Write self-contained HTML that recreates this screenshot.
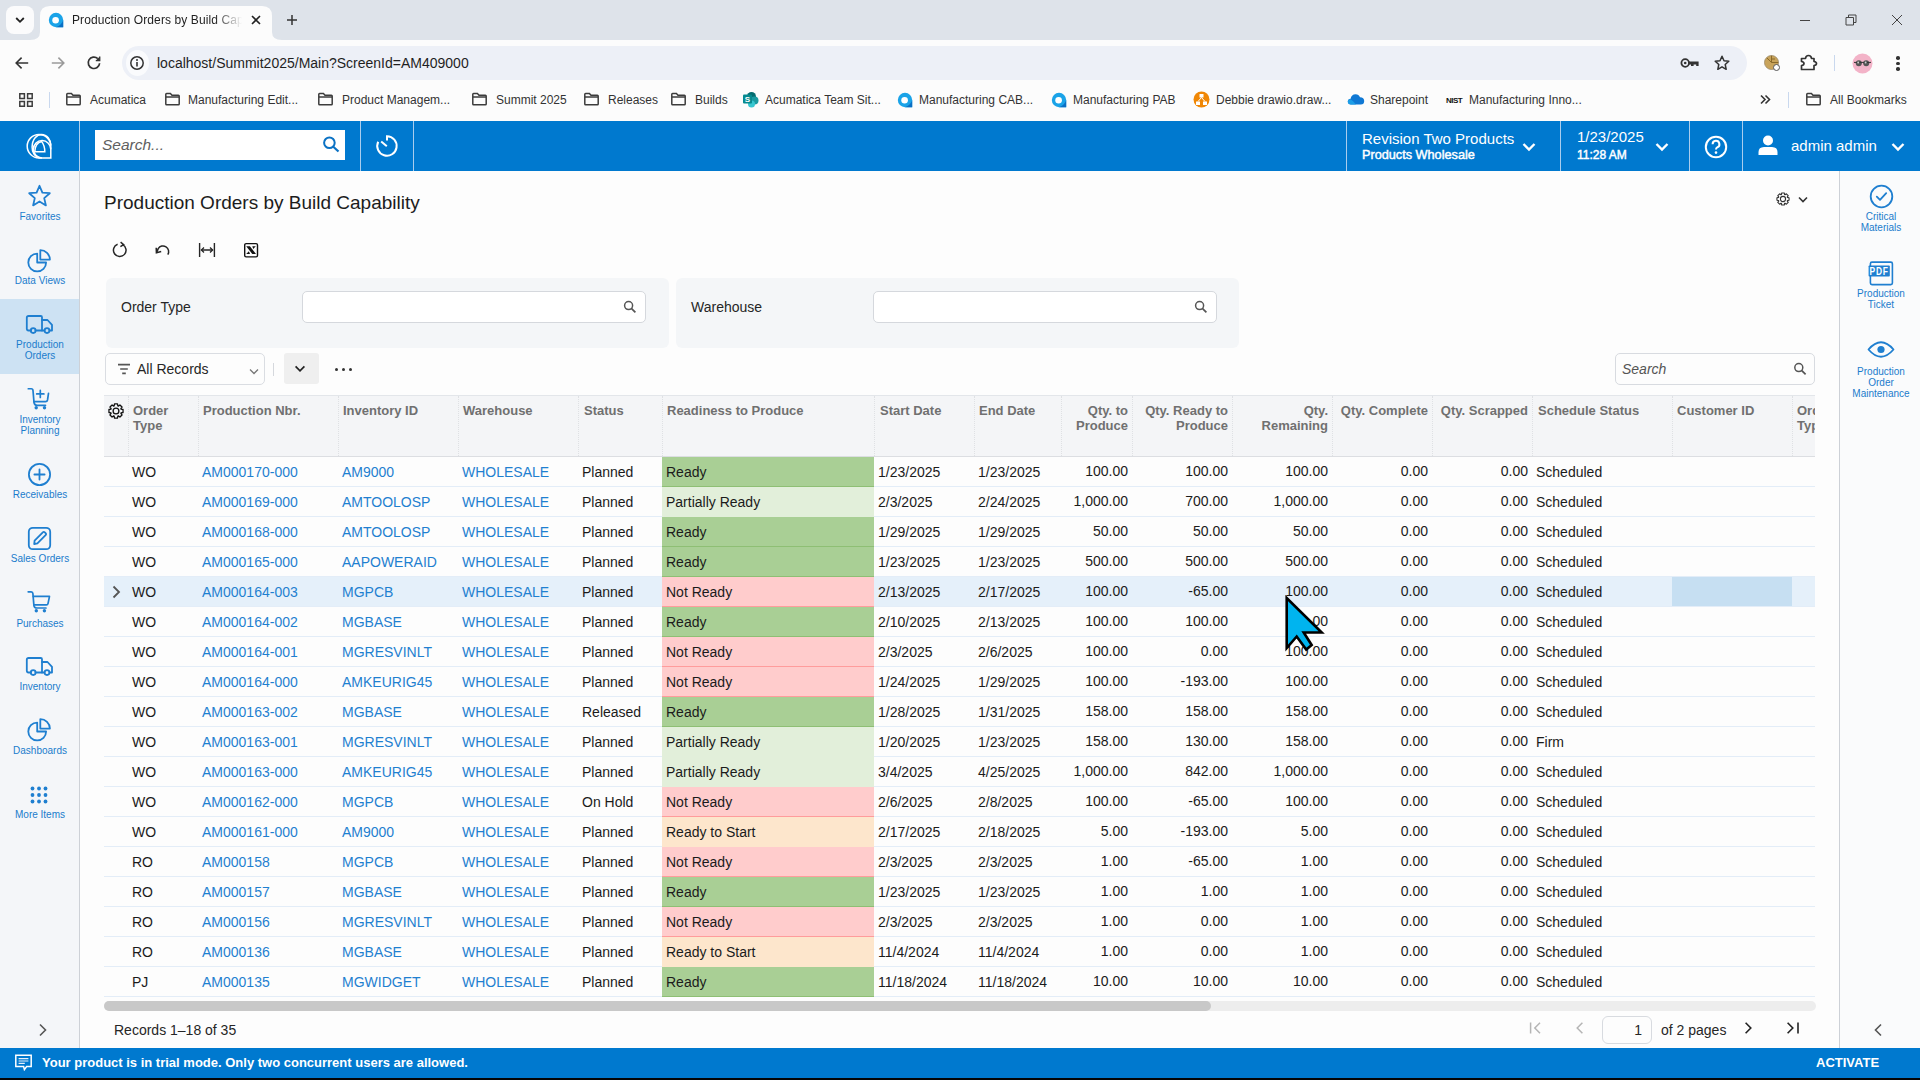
<!DOCTYPE html>
<html><head><meta charset="utf-8">
<style>
*{box-sizing:border-box;margin:0;padding:0}
html,body{width:1920px;height:1080px;overflow:hidden;background:#fdfdfd;font-family:"Liberation Sans",sans-serif;color:#222}
.a{position:absolute}
svg{display:block}
/* chrome */
#tabbar{left:0;top:0;width:1920px;height:40px;background:#dee3ea}
#tabdd{left:6px;top:6px;width:28px;height:28px;border-radius:8px;background:#fbfbfc}
#tab{left:40px;top:6px;width:232px;height:34px;background:#fbfbfc;border-radius:10px 10px 0 0}
#toolbar{left:0;top:40px;width:1920px;height:40px;background:#fcfcfc}
#omni{left:122px;top:46px;width:1625px;height:34px;border-radius:17px;background:#edf0f7}
#bmbar{left:0;top:80px;width:1920px;height:41px;background:#fcfcfc}
.ctext{font-size:12px;color:#2a2a2a;white-space:nowrap}
/* acumatica header */
#hdr{left:0;top:121px;width:1920px;height:50px;background:#0079cf}
.hdiv{top:121px;width:1px;height:50px;background:#a9cdee}
#lsb{left:0;top:171px;width:80px;height:877px;background:#f4f6f9;border-right:1px solid #cdd1d7}
#rsb{left:1839px;top:171px;width:81px;height:877px;background:#fafbfc;border-left:1px solid #cdd1d7}
.sbl{font-size:10px;color:#1a7ccc;text-align:center;line-height:11px;width:80px;left:0}
.rsbl_unused{font-size:10px;color:#1a7ccc;text-align:center;line-height:11px;width:82px;left:1838px}
#banner{left:0;top:1048px;width:1920px;height:30px;background:#0079cf}
#blk{left:0;top:1078px;width:1920px;height:2px;background:#050505}

/* grid */
#grid{left:104px;top:395px;width:1711px;height:602px;overflow:hidden}
#ghdr{left:0;top:0;width:1711px;height:62px;background:#f4f5f7;border-top:1px solid #e3e6ea;border-bottom:1px solid #dcdee2}
.vl{top:1px;width:1px;height:60px;border-left:1px dotted #dfe1e4}
.hc{top:8px;font-size:13px;font-weight:bold;color:#707070;line-height:15px;white-space:nowrap}
.gr{left:0;width:1711px;height:30px;border-bottom:1px solid #e3edf8;background:#fdfdfd}
.gr.sel{background:#e5f0fa}
.gc{top:0;height:29px;line-height:31px;font-size:14px;color:#1b1b1b;padding:0 4px;white-space:nowrap;overflow:hidden}
.gc.r{text-align:right;line-height:29px}
.gc.lk{color:#1f80d0}
.rg{background:#a9cf95;top:0;height:30px;border-bottom:1px solid #8ebf74;color:#1b1b1b}
.rp{background:#e2efda;top:0;height:30px;border-bottom:1px solid #e2efda}
.rn{background:#ffcccc;top:0;height:30px;border-bottom:1px solid #ff9c9c}
.rs{background:#fde6cc;top:0;height:30px;border-bottom:1px solid #fde6cc}
</style></head><body>
<div id="tabbar" class="a"></div>
<div id="tabdd" class="a"></div>
<svg class="a" style="left:14px;top:14px" width="12" height="12" viewBox="0 0 12 12"><path d="M2.2 4 L6 7.8 L9.8 4" fill="none" stroke="#222" stroke-width="1.8"/></svg>
<svg class="a" style="left:30px;top:6px" width="252" height="34" viewBox="0 0 252 34"><path d="M0 34 Q10 34 10 26 V10 Q10 0 20 0 H232 Q242 0 242 10 V26 Q242 34 252 34 Z" fill="#fcfcfc"/></svg>
<svg class="a" style="left:48px;top:12px" width="16" height="16" viewBox="0 0 16 16"><path d="M8 0.8 A7.2 7.2 0 0 0 8 15.2 H15.2 V8 A7.2 7.2 0 0 0 8 0.8 Z" fill="#1aa3e8"/><path d="M8 15.2 H15.2 V8 Q14 13 8 15.2Z" fill="#0b6fc4"/><circle cx="7.6" cy="8.2" r="3.3" fill="#fff"/></svg>
<div class="a ctext" style="left:72px;top:13px;font-size:12px;letter-spacing:0.1px;color:#1f1f1f;width:170px;overflow:hidden;-webkit-mask-image:linear-gradient(90deg,#000 84%,transparent 100%)">Production Orders by Build Capability</div>
<svg class="a" style="left:250px;top:14px" width="12" height="12" viewBox="0 0 12 12"><path d="M2 2 L10 10 M10 2 L2 10" stroke="#222" stroke-width="1.6"/></svg>
<svg class="a" style="left:285px;top:13px" width="14" height="14" viewBox="0 0 14 14"><path d="M7 2 V12 M2 7 H12" stroke="#333" stroke-width="1.5"/></svg>
<div class="a" style="left:1800px;top:20px;width:10px;height:1px;background:#444"></div>
<svg class="a" style="left:1845px;top:14px" width="12" height="12" viewBox="0 0 12 12"><path d="M1 3.5 H8.5 V11 H1 Z M3.5 3.5 V1 H11 V8.5 H8.5" fill="none" stroke="#444" stroke-width="1"/></svg>
<svg class="a" style="left:1891px;top:14px" width="12" height="12" viewBox="0 0 12 12"><path d="M1 1 L11 11 M11 1 L1 11" stroke="#444" stroke-width="1"/></svg>
<div id="toolbar" class="a"></div>
<svg class="a" style="left:14px;top:55px" width="16" height="16" viewBox="0 0 16 16"><path d="M14.2 8 H2.4 M7.6 2.6 L2.2 8 L7.6 13.4" fill="none" stroke="#333" stroke-width="1.6"/></svg>
<svg class="a" style="left:50px;top:55px" width="16" height="16" viewBox="0 0 16 16"><path d="M1.8 8 H13.6 M8.4 2.6 L13.8 8 L8.4 13.4" fill="none" stroke="#9a9a9a" stroke-width="1.6"/></svg>
<svg class="a" style="left:86px;top:55px" width="16" height="16" viewBox="0 0 16 16"><path d="M13.6 8.2 A5.7 5.7 0 1 1 11.8 3.6" fill="none" stroke="#333" stroke-width="1.7"/><path d="M13.8 1.6 V5.6 H9.8" fill="#333" stroke="#333" stroke-width="1.2"/></svg>
<div id="omni" class="a"></div>
<div class="a" style="left:126px;top:50px;width:23px;height:26px;border-radius:50%;background:#fafbfd"></div>
<svg class="a" style="left:129px;top:55px" width="16" height="16" viewBox="0 0 16 16"><circle cx="8" cy="8" r="6.2" fill="none" stroke="#333" stroke-width="1.5"/><path d="M8 7 V11.4" stroke="#333" stroke-width="1.6"/><circle cx="8" cy="4.9" r="1" fill="#333"/></svg>
<div class="a ctext" style="left:157px;top:55px;font-size:14px;color:#1f1f1f">localhost/Summit2025/Main?ScreenId=AM409000</div>
<svg class="a" style="left:1680px;top:56px" width="20" height="14" viewBox="0 0 20 14"><circle cx="5.2" cy="7" r="3.8" fill="none" stroke="#333" stroke-width="1.8"/><circle cx="5.2" cy="7" r="1.3" fill="#333"/><path d="M9 5.6 H18.6 V10 H16.2 V8.4 H13.6 V10 H11 V8.4 H9 Z" fill="#333"/></svg>
<svg class="a" style="left:1714px;top:55px" width="16" height="16" viewBox="0 0 16 16"><path d="M8 1.3 L10 5.8 L14.8 6.2 L11.2 9.5 L12.2 14.3 L8 11.8 L3.8 14.3 L4.8 9.5 L1.2 6.2 L6 5.8 Z" fill="none" stroke="#333" stroke-width="1.5" stroke-linejoin="round"/></svg>
<svg class="a" style="left:1764px;top:55px" width="17" height="16" viewBox="0 0 17 16"><circle cx="7.5" cy="7.5" r="7" fill="#c8a35a"/><path d="M7.5 0.5 V7.5 H14.5 M3 3 L7.5 7.5 M7.5 4 H11" stroke="#8a6a2a" stroke-width="1" fill="none"/><circle cx="7.5" cy="7.5" r="7" fill="none" stroke="#9b8a6a" stroke-width="0.8"/><circle cx="12.5" cy="12.5" r="3" fill="#fff" stroke="#555" stroke-width="1"/></svg>
<svg class="a" style="left:1800px;top:54px" width="18" height="17" viewBox="0 0 18 17"><path d="M1.5 4.5 H5.5 Q5.8 1.5 8.5 1.5 Q11.2 1.5 11.5 4.5 H14 V7.5 Q16.5 7.8 16.5 9.5 Q16.5 11.2 14 11.5 V15.5 H1.5 V11.5 Q4 11.2 4 9.5 Q4 7.8 1.5 7.5 Z" fill="none" stroke="#333" stroke-width="1.7" stroke-linejoin="round"/></svg>
<div class="a" style="left:1834px;top:55px;width:1px;height:16px;background:#c9d8ee"></div>
<svg class="a" style="left:1852px;top:53px" width="21" height="21" viewBox="0 0 21 21"><circle cx="10.5" cy="10.5" r="10" fill="#f3b3c8"/><circle cx="6.8" cy="10.2" r="3" fill="#555"/><circle cx="14.2" cy="10.2" r="3" fill="#555"/><path d="M2 9.4 H19" stroke="#333" stroke-width="1"/><circle cx="6.2" cy="9.4" r="1" fill="#ccc"/><circle cx="13.6" cy="9.4" r="1" fill="#ccc"/></svg>
<div class="a" style="left:1896px;top:56px;width:3.5px;height:3.5px;border-radius:50%;background:#333"></div><div class="a" style="left:1896px;top:61.5px;width:3.5px;height:3.5px;border-radius:50%;background:#333"></div><div class="a" style="left:1896px;top:67px;width:3.5px;height:3.5px;border-radius:50%;background:#333"></div>
<div id="bmbar" class="a"></div>
<svg class="a" style="left:18px;top:92px" width="16" height="16" viewBox="0 0 16 16"><path d="M1.8 1.8 H6.4 V6.4 H1.8 Z M9.6 1.8 H14.2 V6.4 H9.6 Z M1.8 9.6 H6.4 V14.2 H1.8 Z M9.6 9.6 H14.2 V14.2 H9.6 Z" fill="none" stroke="#3c3c3c" stroke-width="1.5"/></svg>
<div class="a" style="left:49px;top:92px;width:1px;height:16px;background:#c9d8ee"></div>
<svg class="a" style="left:65px;top:91px" width="17" height="16" viewBox="0 0 17 16"><path d="M1.8 3.2 Q1.8 2.4 2.6 2.4 H6.4 L8 4.2 H14.4 Q15.2 4.2 15.2 5 V13 Q15.2 13.8 14.4 13.8 H2.6 Q1.8 13.8 1.8 13 Z M1.8 6 H15.2" fill="none" stroke="#3c3c3c" stroke-width="1.5"/></svg>
<div class="a ctext" style="left:90px;top:93px;color:#333">Acumatica</div>
<svg class="a" style="left:164px;top:91px" width="17" height="16" viewBox="0 0 17 16"><path d="M1.8 3.2 Q1.8 2.4 2.6 2.4 H6.4 L8 4.2 H14.4 Q15.2 4.2 15.2 5 V13 Q15.2 13.8 14.4 13.8 H2.6 Q1.8 13.8 1.8 13 Z M1.8 6 H15.2" fill="none" stroke="#3c3c3c" stroke-width="1.5"/></svg>
<div class="a ctext" style="left:188px;top:93px;color:#333">Manufacturing Edit...</div>
<svg class="a" style="left:317px;top:91px" width="17" height="16" viewBox="0 0 17 16"><path d="M1.8 3.2 Q1.8 2.4 2.6 2.4 H6.4 L8 4.2 H14.4 Q15.2 4.2 15.2 5 V13 Q15.2 13.8 14.4 13.8 H2.6 Q1.8 13.8 1.8 13 Z M1.8 6 H15.2" fill="none" stroke="#3c3c3c" stroke-width="1.5"/></svg>
<div class="a ctext" style="left:342px;top:93px;color:#333">Product Managem...</div>
<svg class="a" style="left:471px;top:91px" width="17" height="16" viewBox="0 0 17 16"><path d="M1.8 3.2 Q1.8 2.4 2.6 2.4 H6.4 L8 4.2 H14.4 Q15.2 4.2 15.2 5 V13 Q15.2 13.8 14.4 13.8 H2.6 Q1.8 13.8 1.8 13 Z M1.8 6 H15.2" fill="none" stroke="#3c3c3c" stroke-width="1.5"/></svg>
<div class="a ctext" style="left:496px;top:93px;color:#333">Summit 2025</div>
<svg class="a" style="left:583px;top:91px" width="17" height="16" viewBox="0 0 17 16"><path d="M1.8 3.2 Q1.8 2.4 2.6 2.4 H6.4 L8 4.2 H14.4 Q15.2 4.2 15.2 5 V13 Q15.2 13.8 14.4 13.8 H2.6 Q1.8 13.8 1.8 13 Z M1.8 6 H15.2" fill="none" stroke="#3c3c3c" stroke-width="1.5"/></svg>
<div class="a ctext" style="left:608px;top:93px;color:#333">Releases</div>
<svg class="a" style="left:670px;top:91px" width="17" height="16" viewBox="0 0 17 16"><path d="M1.8 3.2 Q1.8 2.4 2.6 2.4 H6.4 L8 4.2 H14.4 Q15.2 4.2 15.2 5 V13 Q15.2 13.8 14.4 13.8 H2.6 Q1.8 13.8 1.8 13 Z M1.8 6 H15.2" fill="none" stroke="#3c3c3c" stroke-width="1.5"/></svg>
<div class="a ctext" style="left:695px;top:93px;color:#333">Builds</div>
<svg class="a" style="left:742px;top:91px" width="17" height="17" viewBox="0 0 17 17"><circle cx="9.5" cy="5.5" r="4.5" fill="#036c70"/><circle cx="12.5" cy="9.5" r="4" fill="#1a9ba1"/><circle cx="9.5" cy="13" r="3.5" fill="#37c6d0"/><rect x="1" y="3.5" width="9" height="9" rx="1" fill="#058a8f"/><text x="5.5" y="11" text-anchor="middle" font-family="Liberation Sans" font-weight="bold" font-size="8" fill="#fff">S</text></svg>
<div class="a ctext" style="left:765px;top:93px;color:#333">Acumatica Team Sit...</div>
<svg class="a" style="left:897px;top:92px" width="16" height="16" viewBox="0 0 16 16"><path d="M8 0.8 A7.2 7.2 0 0 0 8 15.2 H15.2 V8 A7.2 7.2 0 0 0 8 0.8 Z" fill="#1aa3e8"/><path d="M8 15.2 H15.2 V8 Q14 13 8 15.2Z" fill="#0b6fc4"/><circle cx="7.6" cy="8.2" r="3.3" fill="#fff"/></svg>
<div class="a ctext" style="left:919px;top:93px;color:#333">Manufacturing CAB...</div>
<svg class="a" style="left:1051px;top:92px" width="16" height="16" viewBox="0 0 16 16"><path d="M8 0.8 A7.2 7.2 0 0 0 8 15.2 H15.2 V8 A7.2 7.2 0 0 0 8 0.8 Z" fill="#1aa3e8"/><path d="M8 15.2 H15.2 V8 Q14 13 8 15.2Z" fill="#0b6fc4"/><circle cx="7.6" cy="8.2" r="3.3" fill="#fff"/></svg>
<div class="a ctext" style="left:1073px;top:93px;color:#333">Manufacturing PAB</div>
<svg class="a" style="left:1193px;top:91px" width="17" height="17" viewBox="0 0 17 17"><circle cx="8.5" cy="8.5" r="8" fill="#f08705"/><rect x="6.5" y="3" width="4" height="3.5" fill="#fff"/><rect x="3" y="10.5" width="4" height="3.5" fill="#fff"/><rect x="10" y="10.5" width="4" height="3.5" fill="#fff"/><path d="M8.5 6.5 L5 10.5 M8.5 6.5 L12 10.5" stroke="#fff" stroke-width="1"/></svg>
<div class="a ctext" style="left:1216px;top:93px;color:#333">Debbie drawio.draw...</div>
<svg class="a" style="left:1347px;top:92px" width="18" height="14" viewBox="0 0 18 14"><path d="M4 12.5 Q0.8 12.5 0.8 9.6 Q0.8 7 3.6 6.8 Q4.4 2.2 8.6 2.2 Q11.8 2.2 13 5.2 Q17.2 5.4 17.2 9 Q17.2 12.5 13.8 12.5 Z" fill="#0f78d4"/><path d="M4 12.5 Q0.8 12.5 0.8 9.6 Q0.8 7.6 3 7 Q6 8.5 9 12.5 Z" fill="#1c9de6"/></svg>
<div class="a ctext" style="left:1370px;top:93px;color:#333">Sharepoint</div>
<div class="a" style="left:1446px;top:96px;font-size:8px;font-weight:bold;color:#111;letter-spacing:-0.5px;font-family:'Liberation Sans'">NIST</div>
<div class="a ctext" style="left:1469px;top:93px;color:#333">Manufacturing Inno...</div>
<svg class="a" style="left:1759px;top:93px" width="13" height="13" viewBox="0 0 13 13"><path d="M2 2.5 L6 6.5 L2 10.5 M6.5 2.5 L10.5 6.5 L6.5 10.5" fill="none" stroke="#333" stroke-width="1.6"/></svg>
<div class="a" style="left:1788px;top:92px;width:1px;height:16px;background:#c9d8ee"></div>
<svg class="a" style="left:1805px;top:91px" width="17" height="16" viewBox="0 0 17 16"><path d="M1.8 3.2 Q1.8 2.4 2.6 2.4 H6.4 L8 4.2 H14.4 Q15.2 4.2 15.2 5 V13 Q15.2 13.8 14.4 13.8 H2.6 Q1.8 13.8 1.8 13 Z M1.8 6 H15.2" fill="none" stroke="#3c3c3c" stroke-width="1.5"/></svg>
<div class="a ctext" style="left:1830px;top:93px;color:#333">All Bookmarks</div>


<div id="hdr" class="a"></div>
<svg class="a" style="left:26px;top:133px" width="26" height="26" viewBox="0 0 26 26"><g fill="none" stroke="#fff" stroke-width="1.5" stroke-linejoin="miter"><path d="M13 25 A11.8 11.8 0 1 1 24.8 13.2 V25 Z"/><path d="M14.5 25 C8.5 24 6 19 6.1 14 C6.2 6 11 1.4 15.5 1.4 C21 1.6 24.8 6.5 24.8 12.5"/><path d="M16 25 A8.7 8.7 0 1 1 24.8 16.3"/><path d="M8.8 18.7 C9 13 12 9.4 15.7 8.6 C18 11.5 18.8 15 18.8 18.7 Z"/></g></svg>
<div class="hdiv a" style="left:79px"></div>
<div class="a" style="left:95px;top:130px;width:250px;height:30px;background:#fff"></div>
<div class="a" style="left:102px;top:136px;font-size:15.5px;font-style:italic;color:#606060">Search...</div>
<svg class="a" style="left:321px;top:135px" width="20" height="20" viewBox="0 0 20 20"><circle cx="8.4" cy="7.8" r="5.3" fill="none" stroke="#0b72c4" stroke-width="2"/><path d="M12.3 11.7 L17.5 16.5" stroke="#0b72c4" stroke-width="2.2"/></svg>
<div class="hdiv a" style="left:360px"></div>
<svg class="a" style="left:375px;top:134px" width="24" height="24" viewBox="0 0 24 24"><path d="M12 6.5 V2.3 A9.7 9.7 0 1 1 3.2 7.8" fill="none" stroke="#fff" stroke-width="2"/><path d="M6.2 7.6 L11.8 12.3" stroke="#fff" stroke-width="2"/></svg>
<div class="hdiv a" style="left:413px"></div>
<div class="hdiv a" style="left:1346px"></div>
<div class="a" style="left:1362px;top:130px;font-size:15px;color:#fff;line-height:17px;white-space:nowrap">Revision Two Products</div>
<div class="a" style="left:1362px;top:148px;font-size:12.7px;color:#fff;line-height:14px;white-space:nowrap;-webkit-text-stroke:0.45px #fff">Products Wholesale</div>
<svg class="a" style="left:1521px;top:141px" width="16" height="12" viewBox="0 0 16 12"><path d="M2.5 3 L8 8.5 L13.5 3" fill="none" stroke="#fff" stroke-width="2.4"/></svg>
<div class="hdiv a" style="left:1560px"></div>
<div class="a" style="left:1577px;top:128px;font-size:15px;color:#fff;line-height:17px;white-space:nowrap">1/23/2025</div>
<div class="a" style="left:1577px;top:148px;font-size:12px;color:#fff;line-height:14px;white-space:nowrap;-webkit-text-stroke:0.45px #fff">11:28 AM</div>
<svg class="a" style="left:1654px;top:141px" width="16" height="12" viewBox="0 0 16 12"><path d="M2.5 3 L8 8.5 L13.5 3" fill="none" stroke="#fff" stroke-width="2.4"/></svg>
<div class="hdiv a" style="left:1689px"></div>
<svg class="a" style="left:1704px;top:135px" width="24" height="24" viewBox="0 0 24 24"><circle cx="12" cy="12" r="10.2" fill="none" stroke="#fff" stroke-width="2"/><path d="M8.6 9.2 A3.4 3.4 0 1 1 13.2 12.4 Q12 13 12 14.6" fill="none" stroke="#fff" stroke-width="2"/><circle cx="12" cy="17.6" r="1.3" fill="#fff"/></svg>
<div class="hdiv a" style="left:1742px"></div>
<svg class="a" style="left:1757px;top:135px" width="22" height="21" viewBox="0 0 22 21"><circle cx="11" cy="5.5" r="5" fill="#fff"/><path d="M1.5 20 V17 Q1.5 12.2 7 12 H15 Q20.5 12.2 20.5 17 V20 Z" fill="#fff"/></svg>
<div class="a" style="left:1791px;top:137px;font-size:15px;color:#fff;white-space:nowrap">admin admin</div>
<svg class="a" style="left:1890px;top:141px" width="16" height="12" viewBox="0 0 16 12"><path d="M2.5 3 L8 8.5 L13.5 3" fill="none" stroke="#fff" stroke-width="2.4"/></svg>
<div id="lsb" class="a"></div>
<div class="a" style="left:0;top:299px;width:79px;height:75px;background:#cde2f3"></div>
<svg class="a" style="left:27px;top:184px" width="25" height="24" viewBox="0 0 25 24"><path d="M12.5 1.8 L15.4 8.6 L22.8 9.2 L17.2 14.1 L18.9 21.4 L12.5 17.5 L6.1 21.4 L7.8 14.1 L2.2 9.2 L9.6 8.6 Z" fill="none" stroke="#1f7fd0" stroke-width="1.8" stroke-linejoin="round" stroke-linecap="round"/></svg>
<div class="a sbl" style="left:0px;width:80px;top:211.0px">Favorites</div>
<svg class="a" style="left:26px;top:249px" width="26" height="26" viewBox="0 0 26 26"><path d="M11.2 4.6 A8.9 8.9 0 1 0 20.1 13.5 H11.2 Z" fill="none" stroke="#1f7fd0" stroke-width="1.8" stroke-linejoin="round" stroke-linecap="round"/><path d="M14.3 1.2 A9.6 9.6 0 0 1 23.9 10.6 H14.3 Z" fill="none" stroke="#1f7fd0" stroke-width="1.8" stroke-linejoin="round" stroke-linecap="round"/></svg>
<div class="a sbl" style="left:0px;width:80px;top:275.0px">Data Views</div>
<svg class="a" style="left:25px;top:315px" width="29" height="20" viewBox="0 0 29 20"><path d="M6 15.5 H3.5 Q1.8 15.5 1.8 13.8 V2.6 Q1.8 1 3.5 1 H15.8 Q17 1 17 2.3 V15.5 H10.5" fill="none" stroke="#1f7fd0" stroke-width="1.8" stroke-linejoin="round" stroke-linecap="round"/><path d="M17 5 H22.5 L27 9.8 V15.5 H24.6" fill="none" stroke="#1f7fd0" stroke-width="1.8" stroke-linejoin="round" stroke-linecap="round"/><path d="M17 15.5 H19.4" fill="none" stroke="#1f7fd0" stroke-width="1.8" stroke-linejoin="round" stroke-linecap="round"/><circle cx="8.2" cy="15.6" r="2.4" fill="none" stroke="#1f7fd0" stroke-width="1.8" stroke-linejoin="round" stroke-linecap="round"/><circle cx="22" cy="15.6" r="2.4" fill="none" stroke="#1f7fd0" stroke-width="1.8" stroke-linejoin="round" stroke-linecap="round"/></svg>
<div class="a sbl" style="left:0px;width:80px;top:339.2px">Production<br>Orders</div>
<svg class="a" style="left:26px;top:386px" width="26" height="24" viewBox="0 0 26 24"><path d="M2.3 2.75 H5.3 Q6.9 2.75 7 4.6 L8 16.4 Q8.3 19.3 11 19.3 H19.5" fill="none" stroke="#1f7fd0" stroke-width="1.7" stroke-linejoin="round" stroke-linecap="round"/><path d="M8 15.7 H19.6 Q21.2 15.7 21.5 14 L22.5 7.4" fill="none" stroke="#1f7fd0" stroke-width="1.7" stroke-linejoin="round" stroke-linecap="round"/><path d="M14.3 4.4 V11.4 M10.7 7.9 H17.9" fill="none" stroke="#1f7fd0" stroke-width="1.7" stroke-linejoin="round" stroke-linecap="round"/><circle cx="10.2" cy="21.7" r="1.7" fill="#1f7fd0"/><circle cx="18.5" cy="21.7" r="1.7" fill="#1f7fd0"/></svg>
<div class="a sbl" style="left:0px;width:80px;top:414.4px">Inventory<br>Planning</div>
<svg class="a" style="left:27px;top:462px" width="25" height="25" viewBox="0 0 25 25"><circle cx="12.5" cy="12.5" r="10.6" fill="none" stroke="#1f7fd0" stroke-width="1.8" stroke-linejoin="round" stroke-linecap="round"/><path d="M12.5 7.4 V17.6 M7.4 12.5 H17.6" fill="none" stroke="#1f7fd0" stroke-width="1.8" stroke-linejoin="round" stroke-linecap="round"/></svg>
<div class="a sbl" style="left:0px;width:80px;top:489.3px">Receivables</div>
<svg class="a" style="left:27px;top:526px" width="25" height="25" viewBox="0 0 25 25"><rect x="1.8" y="1.8" width="21.4" height="21.4" rx="4" fill="none" stroke="#1f7fd0" stroke-width="1.8" stroke-linejoin="round" stroke-linecap="round"/><path d="M7.2 18 L7.6 14.6 L15.8 6.4 Q16.8 5.4 17.8 6.4 L18.6 7.2 Q19.6 8.2 18.6 9.2 L10.4 17.4 Z" fill="none" stroke="#1f7fd0" stroke-width="1.8" stroke-linejoin="round" stroke-linecap="round"/></svg>
<div class="a sbl" style="left:0px;width:80px;top:552.5px">Sales Orders</div>
<svg class="a" style="left:26px;top:589px" width="26" height="24" viewBox="0 0 26 24"><path d="M2.2 2.8 H5.2 Q6.8 2.8 6.9 4.6 L7.9 16.4 Q8.2 19 10.8 19 H20" fill="none" stroke="#1f7fd0" stroke-width="1.7" stroke-linejoin="round" stroke-linecap="round"/><path d="M7.3 7.4 H23.5 L22 14.6 Q21.7 15.8 20.5 15.8 H8.2" fill="none" stroke="#1f7fd0" stroke-width="1.7" stroke-linejoin="round" stroke-linecap="round"/><circle cx="10.3" cy="21.7" r="1.7" fill="#1f7fd0"/><circle cx="18.4" cy="21.7" r="1.7" fill="#1f7fd0"/></svg>
<div class="a sbl" style="left:0px;width:80px;top:617.5px">Purchases</div>
<svg class="a" style="left:25px;top:657px" width="29" height="20" viewBox="0 0 29 20"><path d="M6 15.5 H3.5 Q1.8 15.5 1.8 13.8 V2.6 Q1.8 1 3.5 1 H15.8 Q17 1 17 2.3 V15.5 H10.5" fill="none" stroke="#1f7fd0" stroke-width="1.8" stroke-linejoin="round" stroke-linecap="round"/><path d="M17 5 H22.5 L27 9.8 V15.5 H24.6" fill="none" stroke="#1f7fd0" stroke-width="1.8" stroke-linejoin="round" stroke-linecap="round"/><path d="M17 15.5 H19.4" fill="none" stroke="#1f7fd0" stroke-width="1.8" stroke-linejoin="round" stroke-linecap="round"/><circle cx="8.2" cy="15.6" r="2.4" fill="none" stroke="#1f7fd0" stroke-width="1.8" stroke-linejoin="round" stroke-linecap="round"/><circle cx="22" cy="15.6" r="2.4" fill="none" stroke="#1f7fd0" stroke-width="1.8" stroke-linejoin="round" stroke-linecap="round"/></svg>
<div class="a sbl" style="left:0px;width:80px;top:681.0px">Inventory</div>
<svg class="a" style="left:26px;top:718px" width="26" height="26" viewBox="0 0 26 26"><path d="M11.2 4.6 A8.9 8.9 0 1 0 20.1 13.5 H11.2 Z" fill="none" stroke="#1f7fd0" stroke-width="1.8" stroke-linejoin="round" stroke-linecap="round"/><path d="M14.3 1.2 A9.6 9.6 0 0 1 23.9 10.6 H14.3 Z" fill="none" stroke="#1f7fd0" stroke-width="1.8" stroke-linejoin="round" stroke-linecap="round"/></svg>
<div class="a sbl" style="left:0px;width:80px;top:745.3px">Dashboards</div>
<svg class="a" style="left:30px;top:786px" width="18" height="18" viewBox="0 0 18 18"><circle cx="2.5" cy="2.5" r="1.9" fill="#1f7fd0"/><circle cx="2.5" cy="9" r="1.9" fill="#1f7fd0"/><circle cx="2.5" cy="15.5" r="1.9" fill="#1f7fd0"/><circle cx="9" cy="2.5" r="1.9" fill="#1f7fd0"/><circle cx="9" cy="9" r="1.9" fill="#1f7fd0"/><circle cx="9" cy="15.5" r="1.9" fill="#1f7fd0"/><circle cx="15.5" cy="2.5" r="1.9" fill="#1f7fd0"/><circle cx="15.5" cy="9" r="1.9" fill="#1f7fd0"/><circle cx="15.5" cy="15.5" r="1.9" fill="#1f7fd0"/></svg>
<div class="a sbl" style="left:0px;width:80px;top:808.9px">More Items</div>
<svg class="a" style="left:37px;top:1023px" width="12" height="14" viewBox="0 0 12 14"><path d="M3 1.5 L8.5 7 L3 12.5" fill="none" stroke="#555" stroke-width="1.6"/></svg>
<div id="rsb" class="a"></div>
<svg class="a" style="left:1869px;top:184px" width="25" height="25" viewBox="0 0 25 25"><circle cx="12.5" cy="12.5" r="10.8" fill="none" stroke="#1f7fd0" stroke-width="1.8" stroke-linejoin="round" stroke-linecap="round"/><path d="M7.8 12.6 L11 15.8 L17.2 9.2" fill="none" stroke="#1f7fd0" stroke-width="1.8" stroke-linejoin="round" stroke-linecap="round"/></svg>
<div class="a sbl" style="left:1840px;width:82px;top:211.3px">Critical<br>Materials</div>
<svg class="a" style="left:1866px;top:260px" width="28" height="27" viewBox="0 0 28 27"><rect x="4.4" y="2.1" width="22" height="22.5" rx="1.6" fill="none" stroke="#1f7fd0" stroke-width="1.6"/><rect x="2.6" y="5.4" width="21.2" height="11.2" rx="0.8" fill="#1f7fd0"/><text x="0" y="0" transform="translate(13.2 15.1) scale(0.8 1)" text-anchor="middle" font-family="Liberation Sans" font-size="10.5" font-weight="bold" fill="#fff" letter-spacing="1">PDF</text></svg>
<div class="a sbl" style="left:1840px;width:82px;top:288.4px">Production<br>Ticket</div>
<svg class="a" style="left:1867px;top:340px" width="28" height="19" viewBox="0 0 28 19"><path d="M1.5 9.5 Q14 -5 26.5 9.5 Q14 24 1.5 9.5 Z" fill="none" stroke="#1f7fd0" stroke-width="1.8" stroke-linejoin="round" stroke-linecap="round"/><circle cx="14" cy="9.5" r="3.6" fill="#1f7fd0"/></svg>
<div class="a sbl" style="left:1840px;width:82px;top:365.5px">Production<br>Order<br>Maintenance</div>
<svg class="a" style="left:1872px;top:1023px" width="12" height="14" viewBox="0 0 12 14"><path d="M9 1.5 L3.5 7 L9 12.5" fill="none" stroke="#555" stroke-width="1.6"/></svg>

<div class="a" style="left:104px;top:192px;font-size:19px;color:#1c1c1c">Production Orders by Build Capability</div>

<svg class="a" style="left:1774px;top:190px" width="18" height="18" viewBox="0 0 18 18"><g transform="translate(9 9) scale(0.86) translate(-9 -9)"><path d="M14.07 7.15 L16.04 7.50 L16.04 10.50 L14.07 10.85 L13.90 11.28 L15.04 12.92 L12.92 15.04 L11.28 13.90 L10.85 14.07 L10.50 16.04 L7.50 16.04 L7.15 14.07 L6.72 13.90 L5.08 15.04 L2.96 12.92 L4.10 11.28 L3.93 10.85 L1.96 10.50 L1.96 7.50 L3.93 7.15 L4.10 6.72 L2.96 5.08 L5.08 2.96 L6.72 4.10 L7.15 3.93 L7.50 1.96 L10.50 1.96 L10.85 3.93 L11.28 4.10 L12.92 2.96 L15.04 5.08 L13.90 6.72 Z" fill="none" stroke="#333" stroke-width="1.3" stroke-linejoin="round"/><circle cx="9" cy="9" r="3" fill="none" stroke="#333" stroke-width="1.3"/></g></svg>
<svg class="a" style="left:1797px;top:195px" width="12" height="9" viewBox="0 0 12 9"><path d="M2 2.5 L6 6.5 L10 2.5" fill="none" stroke="#333" stroke-width="1.6"/></svg>
<svg class="a" style="left:111px;top:241px" width="18" height="18" viewBox="0 0 18 18"><path d="M11.6 3.6 A6.3 6.3 0 1 1 6.6 3.3" fill="none" stroke="#262626" stroke-width="1.5"/><path d="M9.6 1.2 L12.6 3.6 L9.4 5.6" fill="none" stroke="#262626" stroke-width="1.5"/></svg>
<svg class="a" style="left:153px;top:241px" width="20" height="18" viewBox="0 0 20 18"><path d="M14.8 13.6 A5.6 5.6 0 1 0 5.2 7.6 L3.6 11.6" fill="none" stroke="#262626" stroke-width="1.5"/><path d="M3.2 6.8 L3.4 11.8 L8.2 10.6" fill="none" stroke="#262626" stroke-width="1.5"/></svg>
<svg class="a" style="left:198px;top:242px" width="18" height="16" viewBox="0 0 18 16"><path d="M1.6 1 V15 M16.4 1 V15 M3.5 8 H14.5" fill="none" stroke="#262626" stroke-width="1.4"/><path d="M6 5.6 L3.4 8 L6 10.4 M12 5.6 L14.6 8 L12 10.4" fill="none" stroke="#262626" stroke-width="1.3"/></svg>
<svg class="a" style="left:243px;top:242px" width="16" height="16" viewBox="0 0 16 16"><rect x="1.7" y="1.6" width="12.8" height="13.3" rx="1.4" fill="none" stroke="#111" stroke-width="1.4"/><path d="M3.2 4.3 H6.9 L13 11.9 H9.3 Z" fill="#111"/><path d="M9.3 4.3 H12.8 L10.2 7.1 Z" fill="#111"/><path d="M3.2 11.9 H7 L5.9 9.3 Z" fill="#111"/></svg>
<div class="a" style="left:106px;top:278px;width:563px;height:70px;background:#f4f6f8;border-radius:6px"></div><div class="a" style="left:121px;top:299px;font-size:14px;color:#262626">Order Type</div><div class="a" style="left:302px;top:291px;width:344px;height:32px;background:#fff;border:1px solid #d5d8dd;border-radius:5px"></div><svg class="a" style="left:622px;top:299px" width="16" height="16" viewBox="0 0 16 16"><circle cx="6.6" cy="6.6" r="4" fill="none" stroke="#555" stroke-width="1.5"/><path d="M9.6 9.6 L13.4 13.4" stroke="#555" stroke-width="1.7"/></svg>
<div class="a" style="left:676px;top:278px;width:563px;height:70px;background:#f4f6f8;border-radius:6px"></div><div class="a" style="left:691px;top:299px;font-size:14px;color:#262626">Warehouse</div><div class="a" style="left:873px;top:291px;width:344px;height:32px;background:#fff;border:1px solid #d5d8dd;border-radius:5px"></div><svg class="a" style="left:1193px;top:299px" width="16" height="16" viewBox="0 0 16 16"><circle cx="6.6" cy="6.6" r="4" fill="none" stroke="#555" stroke-width="1.5"/><path d="M9.6 9.6 L13.4 13.4" stroke="#555" stroke-width="1.7"/></svg>
<div class="a" style="left:105px;top:353px;width:160px;height:32px;border:1px solid #dadde2;border-radius:5px;background:#fdfdfd"></div>
<svg class="a" style="left:117px;top:363px" width="14" height="12" viewBox="0 0 14 12"><path d="M1 1.6 H13 M3.2 6 H10.8 M5.2 10.4 H8.8" stroke="#555" stroke-width="1.6"/></svg>
<div class="a" style="left:137px;top:361px;font-size:14px;color:#262626">All Records</div>
<svg class="a" style="left:248px;top:367px" width="12" height="9" viewBox="0 0 12 9"><path d="M2 2.5 L6 6.5 L10 2.5" fill="none" stroke="#777" stroke-width="1.3"/></svg>
<div class="a" style="left:273px;top:363px;width:1px;height:13px;background:#d5d8dd"></div>
<div class="a" style="left:284px;top:353px;width:35px;height:31px;background:#efefef;border-radius:3px"></div>
<svg class="a" style="left:293px;top:364px" width="14" height="10" viewBox="0 0 14 10"><path d="M2.6 2.4 L7 6.8 L11.4 2.4" fill="none" stroke="#222" stroke-width="1.7"/></svg>
<div class="a" style="left:335px;top:368px;width:3px;height:3px;border-radius:50%;background:#333"></div>
<div class="a" style="left:342px;top:368px;width:3px;height:3px;border-radius:50%;background:#333"></div>
<div class="a" style="left:349px;top:368px;width:3px;height:3px;border-radius:50%;background:#333"></div>
<div class="a" style="left:1615px;top:353px;width:200px;height:32px;border:1px solid #d8dbe0;border-radius:5px;background:#fdfdfd"></div>
<div class="a" style="left:1622px;top:361px;font-size:14px;font-style:italic;color:#555">Search</div>
<svg class="a" style="left:1792px;top:361px" width="16" height="16" viewBox="0 0 16 16"><circle cx="6.8" cy="6.6" r="4" fill="none" stroke="#555" stroke-width="1.5"/><path d="M9.8 9.6 L13.6 13.4" stroke="#555" stroke-width="1.7"/></svg>
<div class="a" style="left:104px;top:1001px;width:1712px;height:10px;background:#ededed;border-radius:5px"></div>
<div class="a" style="left:104px;top:1001px;width:1107px;height:10px;background:#c8c8c8;border-radius:5px"></div>
<div class="a" style="left:114px;top:1022px;font-size:14px;color:#262626">Records 1–18 of 35</div>
<svg class="a" style="left:1528px;top:1021px" width="16" height="14" viewBox="0 0 16 14"><path d="M2.6 1.5 V12.5" stroke="#b5b5b5" stroke-width="1.5"/><path d="M12 1.8 L6.8 7 L12 12.2" fill="none" stroke="#b5b5b5" stroke-width="1.5"/></svg>
<svg class="a" style="left:1573px;top:1021px" width="12" height="14" viewBox="0 0 12 14"><path d="M9.4 1.8 L4.2 7 L9.4 12.2" fill="none" stroke="#b5b5b5" stroke-width="1.5"/></svg>
<div class="a" style="left:1602px;top:1016px;width:50px;height:28px;border:1px solid #d8dbe0;border-radius:6px;background:#fdfdfd"></div>
<div class="a" style="left:1602px;top:1022px;width:40px;text-align:right;font-size:14px;color:#262626">1</div>
<div class="a" style="left:1661px;top:1022px;font-size:14px;color:#262626">of 2 pages</div>
<svg class="a" style="left:1743px;top:1021px" width="12" height="14" viewBox="0 0 12 14"><path d="M2.6 1.8 L7.8 7 L2.6 12.2" fill="none" stroke="#222" stroke-width="1.6"/></svg>
<svg class="a" style="left:1785px;top:1021px" width="16" height="14" viewBox="0 0 16 14"><path d="M2.6 1.8 L7.8 7 L2.6 12.2" fill="none" stroke="#222" stroke-width="1.6"/><path d="M13 1.5 V12.5" stroke="#222" stroke-width="1.6"/></svg>
<!--GRID-->
<div id="grid" class="a">
<div id="ghdr" class="a"></div>
<div class="vl a" style="left:24px"></div>
<div class="hc a" style="left:29px;width:65px">Order<br>Type</div>
<div class="vl a" style="left:94px"></div>
<div class="hc a" style="left:99px;width:136px">Production Nbr.</div>
<div class="vl a" style="left:234px"></div>
<div class="hc a" style="left:239px;width:116px">Inventory ID</div>
<div class="vl a" style="left:354px"></div>
<div class="hc a" style="left:359px;width:116px">Warehouse</div>
<div class="vl a" style="left:474px"></div>
<div class="hc a" style="left:480px;width:80px">Status</div>
<div class="vl a" style="left:558px"></div>
<div class="hc a" style="left:563px;width:208px">Readiness to Produce</div>
<div class="vl a" style="left:770px"></div>
<div class="hc a" style="left:776px;width:96px">Start Date</div>
<div class="vl a" style="left:870px"></div>
<div class="hc a" style="left:875px;width:83px">End Date</div>
<div class="vl a" style="left:957px"></div>
<div class="hc a" style="left:957px;width:67px;text-align:right">Qty. to<br>Produce</div>
<div class="vl a" style="left:1028px"></div>
<div class="hc a" style="left:1028px;width:96px;text-align:right">Qty. Ready to<br>Produce</div>
<div class="vl a" style="left:1128px"></div>
<div class="hc a" style="left:1128px;width:96px;text-align:right">Qty.<br>Remaining</div>
<div class="vl a" style="left:1228px"></div>
<div class="hc a" style="left:1228px;width:96px;text-align:right">Qty. Complete</div>
<div class="vl a" style="left:1328px"></div>
<div class="hc a" style="left:1328px;width:96px;text-align:right">Qty. Scrapped</div>
<div class="vl a" style="left:1428px"></div>
<div class="hc a" style="left:1434px;width:136px">Schedule Status</div>
<div class="vl a" style="left:1568px"></div>
<div class="hc a" style="left:1573px;width:116px">Customer ID</div>
<div class="vl a" style="left:1688px"></div>
<div class="hc a" style="left:1693px;width:76px">Order<br>Type</div>
<div class="gr a" style="top:62px">
<div class="gc a " style="left:25px;width:69px;padding-left:3px">WO</div>
<div class="gc a lk" style="left:94px;width:140px">AM000170-000</div>
<div class="gc a lk" style="left:234px;width:120px">AM9000</div>
<div class="gc a lk" style="left:354px;width:120px">WHOLESALE</div>
<div class="gc a " style="left:474px;width:84px">Planned</div>
<div class="gc a rg" style="left:558px;width:212px">Ready</div>
<div class="gc a " style="left:770px;width:100px">1/23/2025</div>
<div class="gc a " style="left:870px;width:87px">1/23/2025</div>
<div class="gc a r" style="left:957px;width:71px">100.00</div>
<div class="gc a r" style="left:1028px;width:100px">100.00</div>
<div class="gc a r" style="left:1128px;width:100px">100.00</div>
<div class="gc a r" style="left:1228px;width:100px">0.00</div>
<div class="gc a r" style="left:1328px;width:100px">0.00</div>
<div class="gc a " style="left:1428px;width:140px">Scheduled</div>
</div>
<div class="gr a" style="top:92px">
<div class="gc a " style="left:25px;width:69px;padding-left:3px">WO</div>
<div class="gc a lk" style="left:94px;width:140px">AM000169-000</div>
<div class="gc a lk" style="left:234px;width:120px">AMTOOLOSP</div>
<div class="gc a lk" style="left:354px;width:120px">WHOLESALE</div>
<div class="gc a " style="left:474px;width:84px">Planned</div>
<div class="gc a rp" style="left:558px;width:212px">Partially Ready</div>
<div class="gc a " style="left:770px;width:100px">2/3/2025</div>
<div class="gc a " style="left:870px;width:87px">2/24/2025</div>
<div class="gc a r" style="left:957px;width:71px">1,000.00</div>
<div class="gc a r" style="left:1028px;width:100px">700.00</div>
<div class="gc a r" style="left:1128px;width:100px">1,000.00</div>
<div class="gc a r" style="left:1228px;width:100px">0.00</div>
<div class="gc a r" style="left:1328px;width:100px">0.00</div>
<div class="gc a " style="left:1428px;width:140px">Scheduled</div>
</div>
<div class="gr a" style="top:122px">
<div class="gc a " style="left:25px;width:69px;padding-left:3px">WO</div>
<div class="gc a lk" style="left:94px;width:140px">AM000168-000</div>
<div class="gc a lk" style="left:234px;width:120px">AMTOOLOSP</div>
<div class="gc a lk" style="left:354px;width:120px">WHOLESALE</div>
<div class="gc a " style="left:474px;width:84px">Planned</div>
<div class="gc a rg" style="left:558px;width:212px">Ready</div>
<div class="gc a " style="left:770px;width:100px">1/29/2025</div>
<div class="gc a " style="left:870px;width:87px">1/29/2025</div>
<div class="gc a r" style="left:957px;width:71px">50.00</div>
<div class="gc a r" style="left:1028px;width:100px">50.00</div>
<div class="gc a r" style="left:1128px;width:100px">50.00</div>
<div class="gc a r" style="left:1228px;width:100px">0.00</div>
<div class="gc a r" style="left:1328px;width:100px">0.00</div>
<div class="gc a " style="left:1428px;width:140px">Scheduled</div>
</div>
<div class="gr a" style="top:152px">
<div class="gc a " style="left:25px;width:69px;padding-left:3px">WO</div>
<div class="gc a lk" style="left:94px;width:140px">AM000165-000</div>
<div class="gc a lk" style="left:234px;width:120px">AAPOWERAID</div>
<div class="gc a lk" style="left:354px;width:120px">WHOLESALE</div>
<div class="gc a " style="left:474px;width:84px">Planned</div>
<div class="gc a rg" style="left:558px;width:212px">Ready</div>
<div class="gc a " style="left:770px;width:100px">1/23/2025</div>
<div class="gc a " style="left:870px;width:87px">1/23/2025</div>
<div class="gc a r" style="left:957px;width:71px">500.00</div>
<div class="gc a r" style="left:1028px;width:100px">500.00</div>
<div class="gc a r" style="left:1128px;width:100px">500.00</div>
<div class="gc a r" style="left:1228px;width:100px">0.00</div>
<div class="gc a r" style="left:1328px;width:100px">0.00</div>
<div class="gc a " style="left:1428px;width:140px">Scheduled</div>
</div>
<div class="gr a sel" style="top:182px">
<div class="gc a " style="left:25px;width:69px;padding-left:3px">WO</div>
<div class="gc a lk" style="left:94px;width:140px">AM000164-003</div>
<div class="gc a lk" style="left:234px;width:120px">MGPCB</div>
<div class="gc a lk" style="left:354px;width:120px">WHOLESALE</div>
<div class="gc a " style="left:474px;width:84px">Planned</div>
<div class="gc a rn" style="left:558px;width:212px">Not Ready</div>
<div class="gc a " style="left:770px;width:100px">2/13/2025</div>
<div class="gc a " style="left:870px;width:87px">2/17/2025</div>
<div class="gc a r" style="left:957px;width:71px">100.00</div>
<div class="gc a r" style="left:1028px;width:100px">-65.00</div>
<div class="gc a r" style="left:1128px;width:100px">100.00</div>
<div class="gc a r" style="left:1228px;width:100px">0.00</div>
<div class="gc a r" style="left:1328px;width:100px">0.00</div>
<div class="gc a " style="left:1428px;width:140px">Scheduled</div>
<div class="a" style="left:1568px;top:0;width:120px;height:29px;background:#c6dff2"></div>
<svg class="a" style="left:7px;top:8px" width="10" height="14" viewBox="0 0 10 14"><path d="M2.5 1.5 L8 7 L2.5 12.5" fill="none" stroke="#555" stroke-width="1.8"/></svg>
</div>
<div class="gr a" style="top:212px">
<div class="gc a " style="left:25px;width:69px;padding-left:3px">WO</div>
<div class="gc a lk" style="left:94px;width:140px">AM000164-002</div>
<div class="gc a lk" style="left:234px;width:120px">MGBASE</div>
<div class="gc a lk" style="left:354px;width:120px">WHOLESALE</div>
<div class="gc a " style="left:474px;width:84px">Planned</div>
<div class="gc a rg" style="left:558px;width:212px">Ready</div>
<div class="gc a " style="left:770px;width:100px">2/10/2025</div>
<div class="gc a " style="left:870px;width:87px">2/13/2025</div>
<div class="gc a r" style="left:957px;width:71px">100.00</div>
<div class="gc a r" style="left:1028px;width:100px">100.00</div>
<div class="gc a r" style="left:1128px;width:100px">100.00</div>
<div class="gc a r" style="left:1228px;width:100px">0.00</div>
<div class="gc a r" style="left:1328px;width:100px">0.00</div>
<div class="gc a " style="left:1428px;width:140px">Scheduled</div>
</div>
<div class="gr a" style="top:242px">
<div class="gc a " style="left:25px;width:69px;padding-left:3px">WO</div>
<div class="gc a lk" style="left:94px;width:140px">AM000164-001</div>
<div class="gc a lk" style="left:234px;width:120px">MGRESVINLT</div>
<div class="gc a lk" style="left:354px;width:120px">WHOLESALE</div>
<div class="gc a " style="left:474px;width:84px">Planned</div>
<div class="gc a rn" style="left:558px;width:212px">Not Ready</div>
<div class="gc a " style="left:770px;width:100px">2/3/2025</div>
<div class="gc a " style="left:870px;width:87px">2/6/2025</div>
<div class="gc a r" style="left:957px;width:71px">100.00</div>
<div class="gc a r" style="left:1028px;width:100px">0.00</div>
<div class="gc a r" style="left:1128px;width:100px">100.00</div>
<div class="gc a r" style="left:1228px;width:100px">0.00</div>
<div class="gc a r" style="left:1328px;width:100px">0.00</div>
<div class="gc a " style="left:1428px;width:140px">Scheduled</div>
</div>
<div class="gr a" style="top:272px">
<div class="gc a " style="left:25px;width:69px;padding-left:3px">WO</div>
<div class="gc a lk" style="left:94px;width:140px">AM000164-000</div>
<div class="gc a lk" style="left:234px;width:120px">AMKEURIG45</div>
<div class="gc a lk" style="left:354px;width:120px">WHOLESALE</div>
<div class="gc a " style="left:474px;width:84px">Planned</div>
<div class="gc a rn" style="left:558px;width:212px">Not Ready</div>
<div class="gc a " style="left:770px;width:100px">1/24/2025</div>
<div class="gc a " style="left:870px;width:87px">1/29/2025</div>
<div class="gc a r" style="left:957px;width:71px">100.00</div>
<div class="gc a r" style="left:1028px;width:100px">-193.00</div>
<div class="gc a r" style="left:1128px;width:100px">100.00</div>
<div class="gc a r" style="left:1228px;width:100px">0.00</div>
<div class="gc a r" style="left:1328px;width:100px">0.00</div>
<div class="gc a " style="left:1428px;width:140px">Scheduled</div>
</div>
<div class="gr a" style="top:302px">
<div class="gc a " style="left:25px;width:69px;padding-left:3px">WO</div>
<div class="gc a lk" style="left:94px;width:140px">AM000163-002</div>
<div class="gc a lk" style="left:234px;width:120px">MGBASE</div>
<div class="gc a lk" style="left:354px;width:120px">WHOLESALE</div>
<div class="gc a " style="left:474px;width:84px">Released</div>
<div class="gc a rg" style="left:558px;width:212px">Ready</div>
<div class="gc a " style="left:770px;width:100px">1/28/2025</div>
<div class="gc a " style="left:870px;width:87px">1/31/2025</div>
<div class="gc a r" style="left:957px;width:71px">158.00</div>
<div class="gc a r" style="left:1028px;width:100px">158.00</div>
<div class="gc a r" style="left:1128px;width:100px">158.00</div>
<div class="gc a r" style="left:1228px;width:100px">0.00</div>
<div class="gc a r" style="left:1328px;width:100px">0.00</div>
<div class="gc a " style="left:1428px;width:140px">Scheduled</div>
</div>
<div class="gr a" style="top:332px">
<div class="gc a " style="left:25px;width:69px;padding-left:3px">WO</div>
<div class="gc a lk" style="left:94px;width:140px">AM000163-001</div>
<div class="gc a lk" style="left:234px;width:120px">MGRESVINLT</div>
<div class="gc a lk" style="left:354px;width:120px">WHOLESALE</div>
<div class="gc a " style="left:474px;width:84px">Planned</div>
<div class="gc a rp" style="left:558px;width:212px">Partially Ready</div>
<div class="gc a " style="left:770px;width:100px">1/20/2025</div>
<div class="gc a " style="left:870px;width:87px">1/23/2025</div>
<div class="gc a r" style="left:957px;width:71px">158.00</div>
<div class="gc a r" style="left:1028px;width:100px">130.00</div>
<div class="gc a r" style="left:1128px;width:100px">158.00</div>
<div class="gc a r" style="left:1228px;width:100px">0.00</div>
<div class="gc a r" style="left:1328px;width:100px">0.00</div>
<div class="gc a " style="left:1428px;width:140px">Firm</div>
</div>
<div class="gr a" style="top:362px">
<div class="gc a " style="left:25px;width:69px;padding-left:3px">WO</div>
<div class="gc a lk" style="left:94px;width:140px">AM000163-000</div>
<div class="gc a lk" style="left:234px;width:120px">AMKEURIG45</div>
<div class="gc a lk" style="left:354px;width:120px">WHOLESALE</div>
<div class="gc a " style="left:474px;width:84px">Planned</div>
<div class="gc a rp" style="left:558px;width:212px">Partially Ready</div>
<div class="gc a " style="left:770px;width:100px">3/4/2025</div>
<div class="gc a " style="left:870px;width:87px">4/25/2025</div>
<div class="gc a r" style="left:957px;width:71px">1,000.00</div>
<div class="gc a r" style="left:1028px;width:100px">842.00</div>
<div class="gc a r" style="left:1128px;width:100px">1,000.00</div>
<div class="gc a r" style="left:1228px;width:100px">0.00</div>
<div class="gc a r" style="left:1328px;width:100px">0.00</div>
<div class="gc a " style="left:1428px;width:140px">Scheduled</div>
</div>
<div class="gr a" style="top:392px">
<div class="gc a " style="left:25px;width:69px;padding-left:3px">WO</div>
<div class="gc a lk" style="left:94px;width:140px">AM000162-000</div>
<div class="gc a lk" style="left:234px;width:120px">MGPCB</div>
<div class="gc a lk" style="left:354px;width:120px">WHOLESALE</div>
<div class="gc a " style="left:474px;width:84px">On Hold</div>
<div class="gc a rn" style="left:558px;width:212px">Not Ready</div>
<div class="gc a " style="left:770px;width:100px">2/6/2025</div>
<div class="gc a " style="left:870px;width:87px">2/8/2025</div>
<div class="gc a r" style="left:957px;width:71px">100.00</div>
<div class="gc a r" style="left:1028px;width:100px">-65.00</div>
<div class="gc a r" style="left:1128px;width:100px">100.00</div>
<div class="gc a r" style="left:1228px;width:100px">0.00</div>
<div class="gc a r" style="left:1328px;width:100px">0.00</div>
<div class="gc a " style="left:1428px;width:140px">Scheduled</div>
</div>
<div class="gr a" style="top:422px">
<div class="gc a " style="left:25px;width:69px;padding-left:3px">WO</div>
<div class="gc a lk" style="left:94px;width:140px">AM000161-000</div>
<div class="gc a lk" style="left:234px;width:120px">AM9000</div>
<div class="gc a lk" style="left:354px;width:120px">WHOLESALE</div>
<div class="gc a " style="left:474px;width:84px">Planned</div>
<div class="gc a rs" style="left:558px;width:212px">Ready to Start</div>
<div class="gc a " style="left:770px;width:100px">2/17/2025</div>
<div class="gc a " style="left:870px;width:87px">2/18/2025</div>
<div class="gc a r" style="left:957px;width:71px">5.00</div>
<div class="gc a r" style="left:1028px;width:100px">-193.00</div>
<div class="gc a r" style="left:1128px;width:100px">5.00</div>
<div class="gc a r" style="left:1228px;width:100px">0.00</div>
<div class="gc a r" style="left:1328px;width:100px">0.00</div>
<div class="gc a " style="left:1428px;width:140px">Scheduled</div>
</div>
<div class="gr a" style="top:452px">
<div class="gc a " style="left:25px;width:69px;padding-left:3px">RO</div>
<div class="gc a lk" style="left:94px;width:140px">AM000158</div>
<div class="gc a lk" style="left:234px;width:120px">MGPCB</div>
<div class="gc a lk" style="left:354px;width:120px">WHOLESALE</div>
<div class="gc a " style="left:474px;width:84px">Planned</div>
<div class="gc a rn" style="left:558px;width:212px">Not Ready</div>
<div class="gc a " style="left:770px;width:100px">2/3/2025</div>
<div class="gc a " style="left:870px;width:87px">2/3/2025</div>
<div class="gc a r" style="left:957px;width:71px">1.00</div>
<div class="gc a r" style="left:1028px;width:100px">-65.00</div>
<div class="gc a r" style="left:1128px;width:100px">1.00</div>
<div class="gc a r" style="left:1228px;width:100px">0.00</div>
<div class="gc a r" style="left:1328px;width:100px">0.00</div>
<div class="gc a " style="left:1428px;width:140px">Scheduled</div>
</div>
<div class="gr a" style="top:482px">
<div class="gc a " style="left:25px;width:69px;padding-left:3px">RO</div>
<div class="gc a lk" style="left:94px;width:140px">AM000157</div>
<div class="gc a lk" style="left:234px;width:120px">MGBASE</div>
<div class="gc a lk" style="left:354px;width:120px">WHOLESALE</div>
<div class="gc a " style="left:474px;width:84px">Planned</div>
<div class="gc a rg" style="left:558px;width:212px">Ready</div>
<div class="gc a " style="left:770px;width:100px">1/23/2025</div>
<div class="gc a " style="left:870px;width:87px">1/23/2025</div>
<div class="gc a r" style="left:957px;width:71px">1.00</div>
<div class="gc a r" style="left:1028px;width:100px">1.00</div>
<div class="gc a r" style="left:1128px;width:100px">1.00</div>
<div class="gc a r" style="left:1228px;width:100px">0.00</div>
<div class="gc a r" style="left:1328px;width:100px">0.00</div>
<div class="gc a " style="left:1428px;width:140px">Scheduled</div>
</div>
<div class="gr a" style="top:512px">
<div class="gc a " style="left:25px;width:69px;padding-left:3px">RO</div>
<div class="gc a lk" style="left:94px;width:140px">AM000156</div>
<div class="gc a lk" style="left:234px;width:120px">MGRESVINLT</div>
<div class="gc a lk" style="left:354px;width:120px">WHOLESALE</div>
<div class="gc a " style="left:474px;width:84px">Planned</div>
<div class="gc a rn" style="left:558px;width:212px">Not Ready</div>
<div class="gc a " style="left:770px;width:100px">2/3/2025</div>
<div class="gc a " style="left:870px;width:87px">2/3/2025</div>
<div class="gc a r" style="left:957px;width:71px">1.00</div>
<div class="gc a r" style="left:1028px;width:100px">0.00</div>
<div class="gc a r" style="left:1128px;width:100px">1.00</div>
<div class="gc a r" style="left:1228px;width:100px">0.00</div>
<div class="gc a r" style="left:1328px;width:100px">0.00</div>
<div class="gc a " style="left:1428px;width:140px">Scheduled</div>
</div>
<div class="gr a" style="top:542px">
<div class="gc a " style="left:25px;width:69px;padding-left:3px">RO</div>
<div class="gc a lk" style="left:94px;width:140px">AM000136</div>
<div class="gc a lk" style="left:234px;width:120px">MGBASE</div>
<div class="gc a lk" style="left:354px;width:120px">WHOLESALE</div>
<div class="gc a " style="left:474px;width:84px">Planned</div>
<div class="gc a rs" style="left:558px;width:212px">Ready to Start</div>
<div class="gc a " style="left:770px;width:100px">11/4/2024</div>
<div class="gc a " style="left:870px;width:87px">11/4/2024</div>
<div class="gc a r" style="left:957px;width:71px">1.00</div>
<div class="gc a r" style="left:1028px;width:100px">0.00</div>
<div class="gc a r" style="left:1128px;width:100px">1.00</div>
<div class="gc a r" style="left:1228px;width:100px">0.00</div>
<div class="gc a r" style="left:1328px;width:100px">0.00</div>
<div class="gc a " style="left:1428px;width:140px">Scheduled</div>
</div>
<div class="gr a" style="top:572px">
<div class="gc a " style="left:25px;width:69px;padding-left:3px">PJ</div>
<div class="gc a lk" style="left:94px;width:140px">AM000135</div>
<div class="gc a lk" style="left:234px;width:120px">MGWIDGET</div>
<div class="gc a lk" style="left:354px;width:120px">WHOLESALE</div>
<div class="gc a " style="left:474px;width:84px">Planned</div>
<div class="gc a rg" style="left:558px;width:212px">Ready</div>
<div class="gc a " style="left:770px;width:100px">11/18/2024</div>
<div class="gc a " style="left:870px;width:87px">11/18/2024</div>
<div class="gc a r" style="left:957px;width:71px">10.00</div>
<div class="gc a r" style="left:1028px;width:100px">10.00</div>
<div class="gc a r" style="left:1128px;width:100px">10.00</div>
<div class="gc a r" style="left:1228px;width:100px">0.00</div>
<div class="gc a r" style="left:1328px;width:100px">0.00</div>
<div class="gc a " style="left:1428px;width:140px">Scheduled</div>
</div>
</div>
<!--/GRID-->
<div id="banner" class="a"></div>
<div class="a" style="left:42px;top:1055px;font-size:13px;font-weight:bold;color:#fff">Your product is in trial mode. Only two concurrent users are allowed.</div>
<div class="a" style="left:1816px;top:1055px;font-size:13px;font-weight:bold;color:#fff">ACTIVATE</div>
<svg class="a" style="left:107px;top:402px" width="18" height="18" viewBox="0 0 18 18"><path d="M14.07 7.15 L16.04 7.50 L16.04 10.50 L14.07 10.85 L13.90 11.28 L15.04 12.92 L12.92 15.04 L11.28 13.90 L10.85 14.07 L10.50 16.04 L7.50 16.04 L7.15 14.07 L6.72 13.90 L5.08 15.04 L2.96 12.92 L4.10 11.28 L3.93 10.85 L1.96 10.50 L1.96 7.50 L3.93 7.15 L4.10 6.72 L2.96 5.08 L5.08 2.96 L6.72 4.10 L7.15 3.93 L7.50 1.96 L10.50 1.96 L10.85 3.93 L11.28 4.10 L12.92 2.96 L15.04 5.08 L13.90 6.72 Z" fill="none" stroke="#111" stroke-width="1.3" stroke-linejoin="round"/><circle cx="9" cy="9" r="2.9" fill="none" stroke="#111" stroke-width="1.3"/></svg>
<svg class="a" style="left:1283px;top:595px" width="42" height="58" viewBox="0 0 42 58"><path d="M3.7 3 V53 L13.7 41.5 L23.2 54.6 L28.7 50 L20.7 37.5 H38.7 Z" fill="#00b4ef" stroke="#000" stroke-width="2.6" stroke-linejoin="miter"/></svg>
<svg class="a" style="left:14px;top:1054px" width="19" height="17" viewBox="0 0 19 17"><path d="M1.8 1.2 H17.2 V12.6 H12.6 L10.4 15.6 L9.6 12.6 H1.8 Z" fill="none" stroke="#fff" stroke-width="1.5"/><path d="M4.6 4.6 H14.4 M4.6 7 H14.4 M4.6 9.4 H10.8" stroke="#e6f0fa" stroke-width="1.2"/></svg>
<div id="blk" class="a"></div>
</body></html>
